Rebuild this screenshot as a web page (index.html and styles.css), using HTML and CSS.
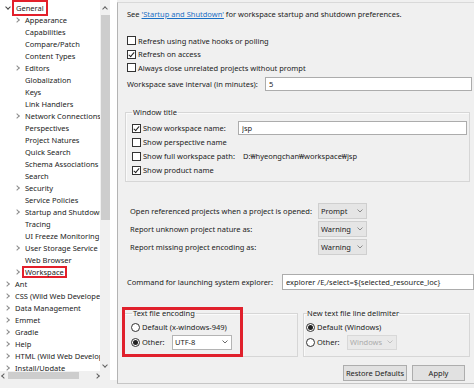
FILE: index.html
```html
<!DOCTYPE html>
<html lang="en">

<head>
    <meta charset="UTF-8">
    <meta name="viewport" content="width=device-width, initial-scale=1.0">
    <title>Preferences - Workspace</title>
    <link rel="stylesheet" href="styles.css">
</head>

<body>
    <div class="window">
        <!-- Preference tree -->
        <aside class="sidebar">
            <ul class="tree">
                <li class="open"><span class="tw"></span><span class="mark">General</span></li>
                <li class="sub"><span class="tw"></span>Appearance</li>
                <li class="sub"><span class="tw none"></span>Capabilities</li>
                <li class="sub"><span class="tw none"></span>Compare/Patch</li>
                <li class="sub"><span class="tw none"></span>Content Types</li>
                <li class="sub"><span class="tw"></span>Editors</li>
                <li class="sub"><span class="tw none"></span>Globalization</li>
                <li class="sub"><span class="tw none"></span>Keys</li>
                <li class="sub"><span class="tw none"></span>Link Handlers</li>
                <li class="sub"><span class="tw"></span>Network Connections</li>
                <li class="sub"><span class="tw none"></span>Perspectives</li>
                <li class="sub"><span class="tw none"></span>Project Natures</li>
                <li class="sub"><span class="tw none"></span>Quick Search</li>
                <li class="sub"><span class="tw none"></span>Schema Associations</li>
                <li class="sub"><span class="tw none"></span>Search</li>
                <li class="sub"><span class="tw"></span>Security</li>
                <li class="sub"><span class="tw none"></span>Service Policies</li>
                <li class="sub"><span class="tw"></span>Startup and Shutdown</li>
                <li class="sub"><span class="tw none"></span>Tracing</li>
                <li class="sub"><span class="tw none"></span>UI Freeze Monitoring</li>
                <li class="sub"><span class="tw"></span>User Storage Service</li>
                <li class="sub"><span class="tw none"></span>Web Browser</li>
                <li class="sub"><span class="tw"></span><span class="picked">Workspace</span></li>
                <li><span class="tw"></span>Ant</li>
                <li><span class="tw"></span>CSS (Wild Web Developer)</li>
                <li><span class="tw"></span>Data Management</li>
                <li><span class="tw"></span>Emmet</li>
                <li><span class="tw"></span>Gradle</li>
                <li><span class="tw"></span>Help</li>
                <li><span class="tw"></span>HTML (Wild Web Developer)</li>
                <li><span class="tw"></span>Install/Update</li>
            </ul>
            <div class="vscroll">
                <span class="sb-arrow up"></span>
                <span class="thumb"></span>
                <span class="sb-arrow down"></span>
            </div>
            <div class="hscroll">
                <span class="sb-arrow left"></span>
                <span class="thumb"></span>
                <span class="sb-arrow right"></span>
            </div>
        </aside>

        <!-- Workspace page -->
        <main class="page">
            <p class="intro">See <a href="#">'Startup and Shutdown'</a> for workspace startup and shutdown preferences.</p>

            <div class="checks">
                <label class="check"><span class="box"></span>Refresh using native hooks or polling</label>
                <label class="check"><span class="box on"></span>Refresh on access</label>
                <label class="check"><span class="box"></span>Always close unrelated projects without prompt</label>
            </div>

            <div class="save">
                <label for="save-interval">Workspace save interval (in minutes):</label>
                <input type="text" id="save-interval" value="5">
            </div>

            <fieldset class="group title-group">
                <legend>Window title</legend>
                <div class="title-grid">
                    <label class="check"><span class="box on"></span>Show workspace name:</label>
                    <input type="text" value="jsp">
                    <label class="check wide"><span class="box"></span>Show perspective name</label>
                    <label class="check"><span class="box"></span>Show full workspace path:</label>
                    <span class="path">D:₩hyeongchan₩workspace₩jsp</span>
                    <label class="check wide"><span class="box on"></span>Show product name</label>
                </div>
            </fieldset>

            <div class="combos">
                <span>Open referenced projects when a project is opened:</span>
                <div class="combo"><span>Prompt</span><svg width="6" height="4" viewBox="0 0 6 4"><path d="M0.5 0.5 L3 3 L5.5 0.5" fill="none" stroke="#8a8a8a"/></svg></div>
                <span>Report unknown project nature as:</span>
                <div class="combo"><span>Warning</span><svg width="6" height="4" viewBox="0 0 6 4"><path d="M0.5 0.5 L3 3 L5.5 0.5" fill="none" stroke="#8a8a8a"/></svg></div>
                <span>Report missing project encoding as:</span>
                <div class="combo"><span>Warning</span><svg width="6" height="4" viewBox="0 0 6 4"><path d="M0.5 0.5 L3 3 L5.5 0.5" fill="none" stroke="#8a8a8a"/></svg></div>
            </div>

            <div class="explorer">
                <label for="explorer-cmd">Command for launching system explorer:</label>
                <input type="text" id="explorer-cmd" value="explorer /E,/select=${selected_resource_loc}">
            </div>

            <div class="groups">
                <fieldset class="group encoding">
                    <legend>Text file encoding</legend>
                    <div class="radio-grid">
                        <label class="radio wide"><span class="dot"></span>Default (x-windows-949)</label>
                        <label class="radio"><span class="dot on"></span>Other:</label>
                        <div class="combo white"><span>UTF-8</span><svg width="6" height="4" viewBox="0 0 6 4"><path d="M0.5 0.5 L3 3 L5.5 0.5" fill="none" stroke="#6a6a6a"/></svg></div>
                    </div>
                </fieldset>
                <fieldset class="group delimiter">
                    <legend>New text file line delimiter</legend>
                    <div class="radio-grid">
                        <label class="radio wide"><span class="dot on"></span>Default (Windows)</label>
                        <label class="radio"><span class="dot"></span>Other:</label>
                        <div class="combo off"><span>Windows</span><svg width="6" height="4" viewBox="0 0 6 4"><path d="M0.5 0.5 L3 3 L5.5 0.5" fill="none" stroke="#c0c0c0"/></svg></div>
                    </div>
                </fieldset>
                <div class="callout"></div>
            </div>

            <div class="buttons">
                <button class="restore">Restore Defaults</button>
                <button class="apply">Apply</button>
            </div>
        </main>
    </div>
</body>

</html>
```

FILE: styles.css
```css
body {
    margin: 0;
    width: 474px;
    height: 388px;
    overflow: hidden;
    font-family: "Noto Sans", "DejaVu Sans", sans-serif;
    font-size: 7.5px;
    color: #1b1b1b;
    background-color: #f0f0f0;
}

.window {
    display: flex;
    height: 388px;
}

/* left tree */
.sidebar {
    flex: none;
    width: 117px;
    height: 380px;
    background: white;
    display: grid;
    grid-template-columns: 100px 10px 7px;
    grid-template-rows: 371px 9px;
}

.tree {
    list-style: none;
    margin: 0;
    padding: 2px 0 0 0;
    overflow: hidden;
    color: #222;
}

.tree li {
    height: 12px;
    line-height: 12px;
    white-space: nowrap;
    padding-left: 4px;
}

.tree li.sub {
    padding-left: 14px;
}

.tw {
    display: inline-block;
    width: 11px;
}

.tw::before {
    content: "";
    display: inline-block;
    width: 3px;
    height: 3px;
    margin: 0 0 1px 1px;
    border-right: 1px solid #8c8c8c;
    border-bottom: 1px solid #8c8c8c;
    transform: rotate(-45deg);
    vertical-align: middle;
}

.tw.none::before {
    border: none;
}

.open .tw::before {
    transform: rotate(45deg);
    margin: 0 0 3px 2px;
    border-color: #444;
}

.mark {
    outline: 2px solid #e3202b;
    outline-offset: 1px;
    padding: 0 1px;
}

.picked {
    display: inline-block;
    height: 12px;
    line-height: 8px;
    box-sizing: border-box;
    border: 2px solid #e3202b;
    padding: 0 1px;
    margin-left: -3px;
    vertical-align: top;
}

.vscroll {
    grid-row: 1;
    grid-column: 2;
    display: flex;
    flex-direction: column;
    align-items: center;
    background-color: #f0f0f0;
}

.vscroll .thumb {
    width: 9px;
    height: 205px;
    background-color: #cdcdcd;
}

.sb-arrow {
    display: flex;
    align-items: center;
    justify-content: center;
}

.sb-arrow::before {
    content: "";
    width: 3px;
    height: 3px;
    border-left: 1px solid #606060;
    border-top: 1px solid #606060;
}

.vscroll .sb-arrow {
    width: 10px;
    height: 15px;
}

.vscroll .down {
    margin-top: auto;
    height: 12px;
}

.up::before {
    transform: rotate(45deg);
    margin-top: 3px;
}

.down::before {
    transform: rotate(225deg);
}

.hscroll {
    grid-row: 2;
    grid-column: 1 / 3;
    display: flex;
    align-items: center;
    background-color: #f0f0f0;
}

.hscroll .sb-arrow {
    width: 8px;
    height: 9px;
}

.left::before {
    transform: rotate(-45deg);
}

.right::before {
    transform: rotate(135deg);
}

.hscroll .thumb {
    width: 71px;
    height: 7px;
    background-color: #cdcdcd;
}

.hscroll .right {
    margin-left: 14px;
}

/* right page */
.page {
    flex: 1;
    margin-top: 2px;
    height: 382px;
    box-sizing: border-box;
    border-top: 1px solid #d9d9d9;
    border-left: 1px solid #b4b4b4;
    border-bottom: 1px solid #c6c6c6;
    padding: 0 2px 0 7px;
    display: flex;
    flex-direction: column;
}

.intro {
    margin: 5px 0 0 2px;
    line-height: 12px;
    white-space: nowrap;
}

.intro a {
    color: #1a6fc4;
}

.checks {
    margin: 14px 0 0 2px;
}

.check {
    display: flex;
    align-items: center;
    gap: 2px;
    height: 13.5px;
    white-space: nowrap;
}

.box {
    flex: none;
    width: 9px;
    height: 9px;
    box-sizing: border-box;
    border: 1px solid #333;
    background: white;
    position: relative;
}

.box.on::after {
    content: "";
    position: absolute;
    left: 2px;
    top: 0;
    width: 2px;
    height: 5px;
    border-right: 1px solid #222;
    border-bottom: 1px solid #222;
    transform: rotate(40deg);
}

input {
    box-sizing: border-box;
    height: 14px;
    border: 1px solid #acacac;
    background: white;
    font: inherit;
    color: #1b1b1b;
    padding: 0 3px;
    margin: 0;
}

.save {
    display: flex;
    align-items: center;
    height: 14px;
    margin: 2.5px 0 0 2px;
}

.save label {
    width: 138px;
    white-space: nowrap;
}

.save input {
    flex: 1;
}

.group {
    margin: 0;
    border: 1px solid #d6d6d6;
    box-shadow: inset 1px 1px 0 #fafafa;
    min-width: 0;
}

.group legend {
    line-height: 10px;
    padding: 0 1px;
    white-space: nowrap;
}

.title-group {
    margin: 16px 2px 0 0;
    padding: 4px 2px 4px 6px;
}

.title-grid {
    display: grid;
    grid-template-columns: 106px 1fr;
    grid-auto-rows: 14px;
    align-items: center;
}

.title-grid .wide {
    grid-column: 1 / 3;
}

.title-grid .check {
    height: 14px;
}

.path {
    padding-left: 5px;
    white-space: nowrap;
}

.combos {
    margin: 21px 0 0 5px;
    display: grid;
    grid-template-columns: 188px 49px;
    grid-auto-rows: 16px;
    row-gap: 2px;
    align-items: center;
    white-space: nowrap;
}

.combo {
    height: 16px;
    box-sizing: border-box;
    border: 1px solid #cfcfcf;
    background-color: #e5e5e5;
    display: flex;
    align-items: center;
    justify-content: space-between;
    padding: 0 3px 0 2px;
}

.combo.white {
    background: white;
    border-color: #b4b4b4;
    height: 15px;
}

.combo.off {
    color: #ababab;
    background-color: #e9e9e9;
    border-color: #d8d8d8;
    height: 15px;
}

.explorer {
    display: flex;
    align-items: center;
    height: 16px;
    margin: 19px -2px 0 2px;
}

.explorer label {
    width: 155px;
    white-space: nowrap;
}

.explorer input {
    flex: 1;
    height: 16px;
}

.groups {
    display: flex;
    gap: 5px;
    margin: 18px 0 0 -2px;
    position: relative;
}

.encoding {
    width: 175px;
    box-sizing: border-box;
    padding: 2px 4px 6px 7px;
}

.encoding legend {
    margin-left: 1px;
}

.delimiter {
    flex: 1;
    margin-right: 2px;
    padding: 2px 4px 6px 2px;
}

.delimiter legend {
    padding: 0;
    margin-left: 1px;
}

.radio-grid {
    display: grid;
    grid-template-columns: 41px auto;
    grid-template-rows: 14px 16px;
    align-items: center;
    justify-content: start;
}

.radio-grid .wide {
    grid-column: 1 / 3;
}

.encoding .combo {
    width: 60px;
}

.delimiter .combo {
    width: 50px;
}

.radio {
    display: flex;
    align-items: center;
    gap: 2px;
    white-space: nowrap;
}

.dot {
    flex: none;
    width: 9px;
    height: 9px;
    box-sizing: border-box;
    border: 1px solid #333;
    border-radius: 50%;
    background: white;
    display: flex;
    align-items: center;
    justify-content: center;
}

.dot.on::after {
    content: "";
    width: 5px;
    height: 5px;
    border-radius: 50%;
    background-color: #222;
}

.callout {
    position: absolute;
    left: -1px;
    top: -1px;
    width: 121px;
    height: 50px;
    box-sizing: border-box;
    border: 3px solid #e0202c;
}

.buttons {
    display: flex;
    justify-content: flex-end;
    gap: 5px;
    margin: 8px 7px 0 0;
}

button {
    height: 16px;
    border: 1px solid #adadad;
    background-color: #e1e1e1;
    font: inherit;
    color: #1b1b1b;
    padding: 0;
}

.restore {
    width: 64px;
}

.apply {
    width: 53px;
}
```
